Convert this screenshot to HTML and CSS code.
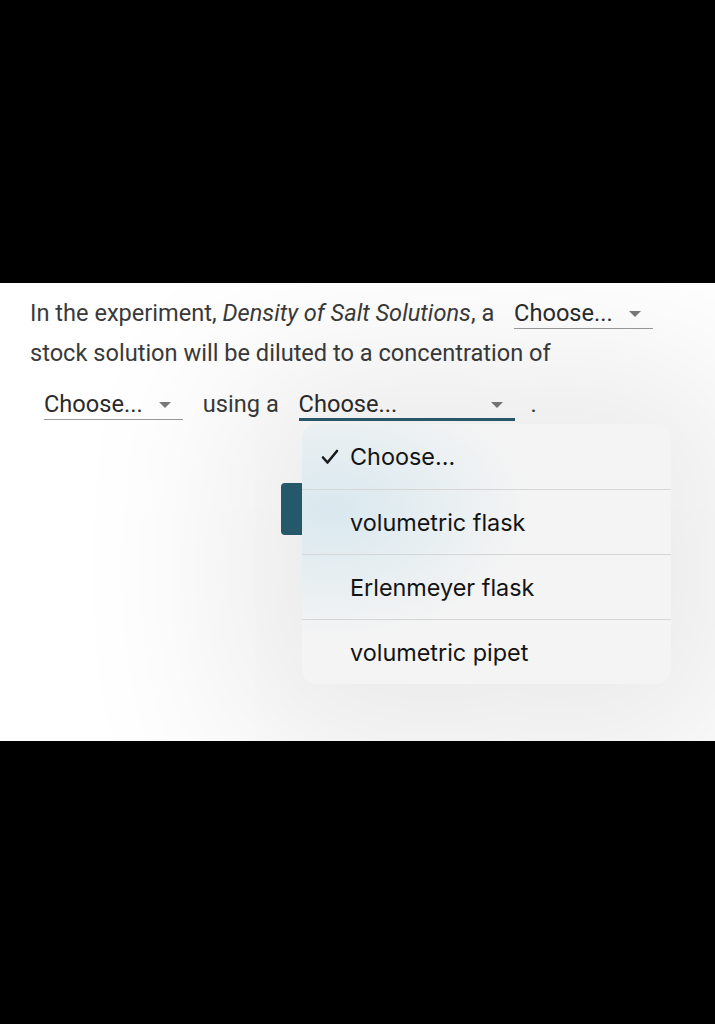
FILE: index.html
```html
<!DOCTYPE html>
<html lang="en">
<head>
<meta charset="utf-8">
<title>Density of Salt Solutions</title>
<link rel="stylesheet" href="styles.css">
</head>
<body>
<div class="bar bar-top"></div>
<section class="panel">
  <p class="question">In the experiment, <em>Density of Salt Solutions</em>, a <span class="sel">Choose...<span class="arrow"></span></span> stock solution will be diluted to a concentration of <span class="sel sel-gap">Choose...<span class="arrow"></span></span> using a <span class="sel sel-wide sel-active">Choose...<span class="arrow"></span></span>.</p>
  <div class="btn"></div>
  <div class="menu">
    <div class="opt opt-checked"><svg class="check" width="18" height="16" viewBox="0 0 18 16"><polyline points="2,8.5 6.5,13.5 16,2" fill="none" stroke="#1a1a1a" stroke-width="2.6" stroke-linecap="round" stroke-linejoin="round"/></svg>Choose...</div>
    <div class="opt">volumetric flask</div>
    <div class="opt">Erlenmeyer flask</div>
    <div class="opt">volumetric pipet</div>
  </div>
</section>
<div class="bar bar-bottom"></div>
</body>
</html>
```
FILE: styles.css
```css
html, body {
  margin: 0;
  padding: 0;
  background: #000;
}
.bar-top { height: 283px; background: #000; }
.bar-bottom { height: 283px; background: #000; }
.panel {
  position: relative;
  height: 458px;
  background: #fff;
  overflow: hidden;
}
.question {
  margin: 0;
  padding: 10px 30px 0 30px;
  font-family: Roboto, "Liberation Sans", sans-serif;
  font-size: 23.6px;
  line-height: 40px;
  color: #3a3a3a;
  position: relative;
  z-index: 2;
}
.question em {
  font-style: italic;
}
.sel {
  display: inline-block;
  position: relative;
  width: 139px;
  box-sizing: border-box;
  margin: 0 14px;
  line-height: 26px;
  padding-bottom: 2px;
  border-bottom: 1.5px solid #9a9a9a;
  color: #2b2b2b;
  vertical-align: baseline;
}
.sel-gap { margin-top: 18px; }
.sel-wide { width: 216px; margin-right: 16px; }
.sel-active { border-bottom: 3.5px solid #2b5d6e; padding-bottom: 1px; }
.arrow {
  position: absolute;
  right: 12px;
  top: 11px;
  width: 0;
  height: 0;
  border-left: 6px solid transparent;
  border-right: 6px solid transparent;
  border-top: 6px solid #7a7a7a;
}
.btn {
  margin: 59px 0 0 281px;
  width: 200px;
  height: 52px;
  border-radius: 4px;
  background: #285e70;
  position: relative;
  z-index: 1;
}
.menu {
  position: absolute;
  left: 302px;
  top: 141px;
  width: 369px;
  border-radius: 14px;
  background:
    radial-gradient(ellipse 200px 130px at 30px 85px, rgba(214, 231, 238, 0.9), rgba(220, 234, 240, 0) 100%),
    #f4f4f4;
  box-shadow: 0 10px 170px 70px rgba(0, 0, 0, 0.085);
  font-family: Inter, "Noto Sans", sans-serif;
  font-size: 23.4px;
  color: #141414;
  z-index: 3;
  overflow: hidden;
}
.opt {
  height: 65px;
  box-sizing: border-box;
  display: flex;
  align-items: center;
  padding-left: 48px;
  border-top: 1px solid #d6d6d6;
  position: relative;
}
.opt:first-child { border-top: none; }
.check {
  position: absolute;
  left: 19px;
  top: 25px;
}
```
